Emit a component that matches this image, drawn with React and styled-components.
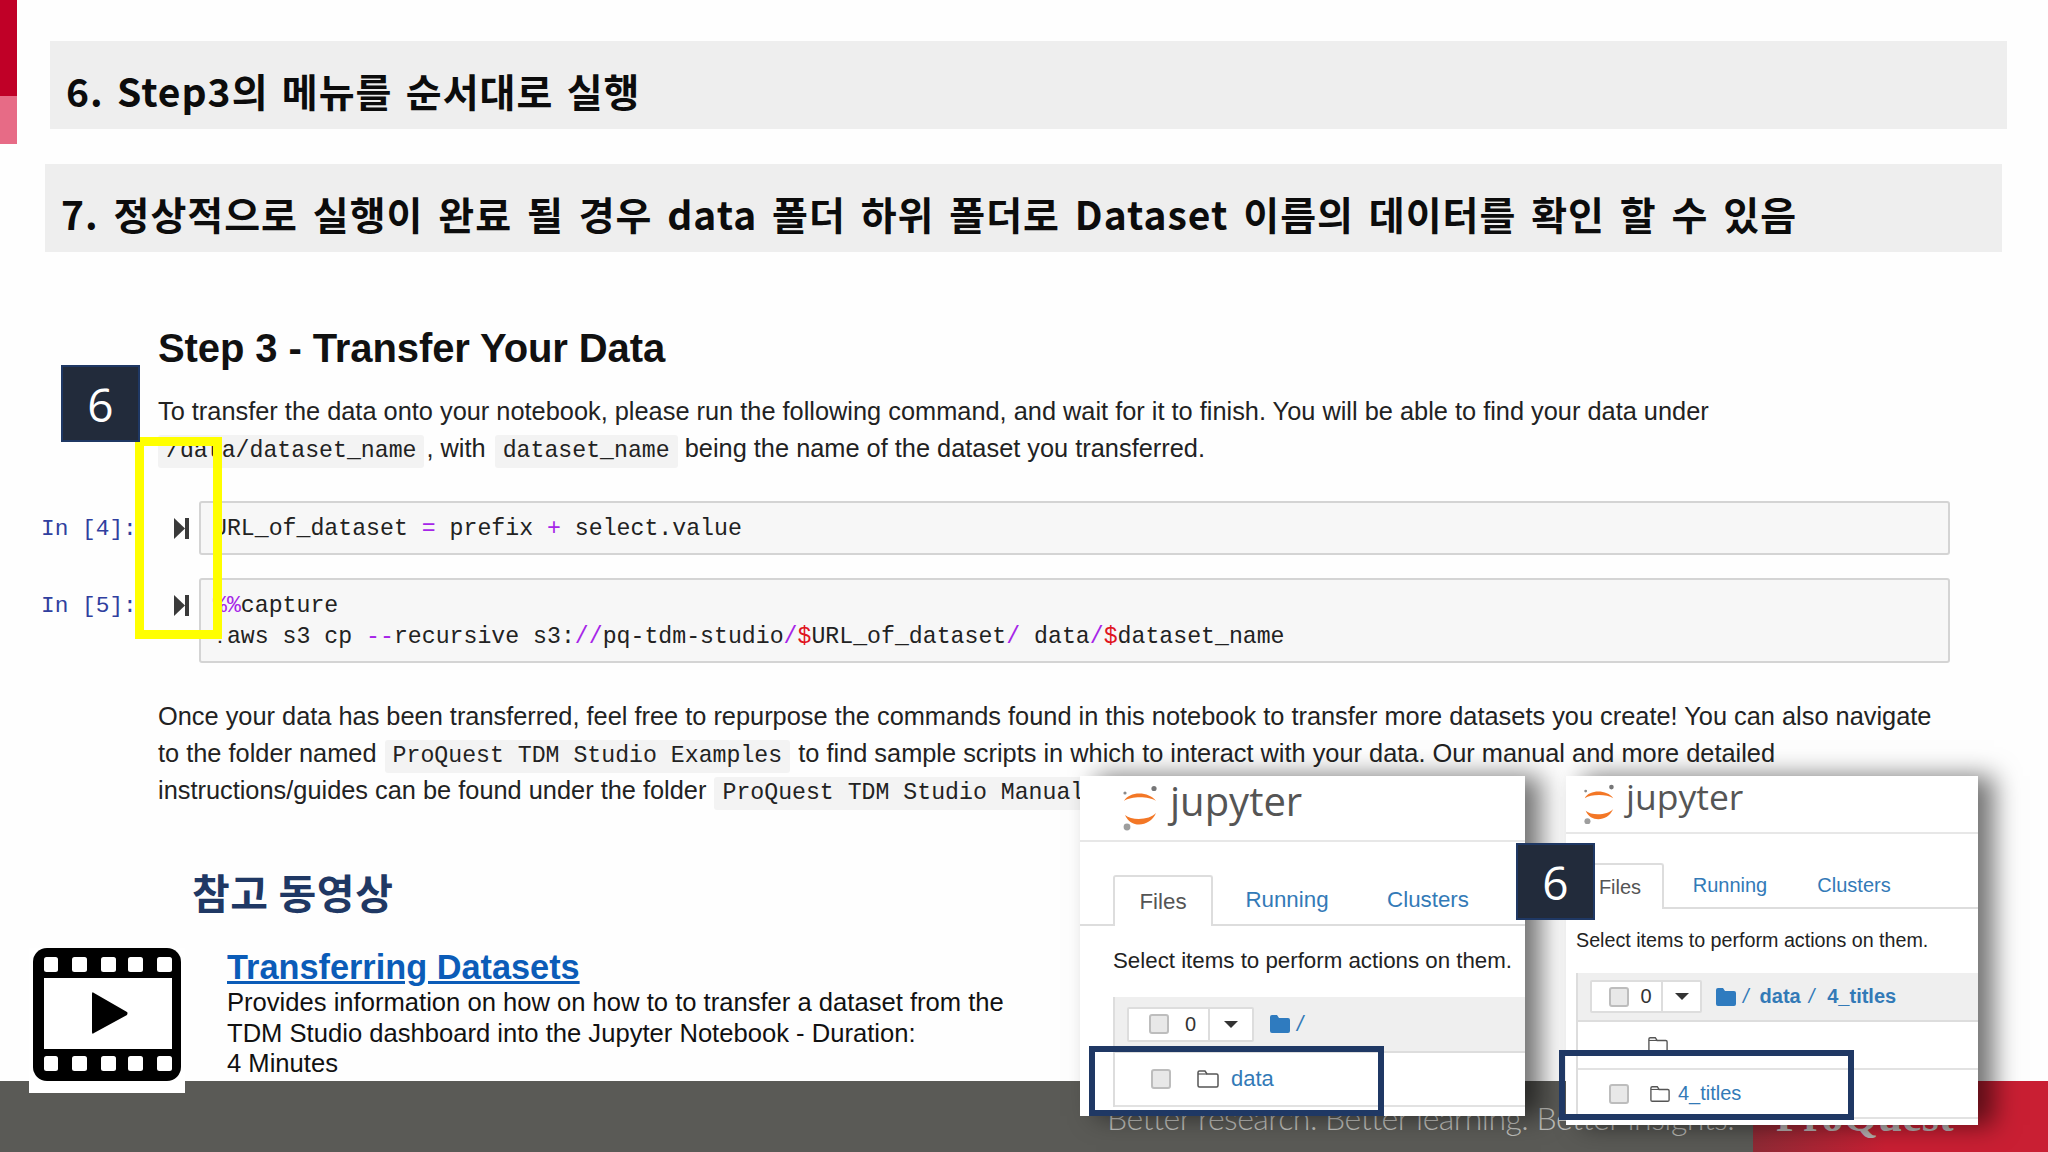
import React from "react";
import styled, { createGlobalStyle } from "styled-components";

const KO = `"Noto Sans CJK KR", "Noto Sans", sans-serif`;
const SANS = `"Liberation Sans", Arial, sans-serif`;
const MONO = `"Liberation Mono", monospace`;

const Global = createGlobalStyle`
  html, body { margin: 0; padding: 0; background: #fff; }
  * { box-sizing: border-box; }
`;

const Slide = styled.div`
  position: relative;
  width: 2048px;
  height: 1152px;
  overflow: hidden;
  background: #fefefe;
  display: flex;
  flex-direction: column;
  font-family: ${SANS};
`;

/* top: red accent + two title bars */
const Header = styled.header`
  display: flex;
  height: 252px;
  flex-shrink: 0;
`;
const Accent = styled.div`
  width: 17px;
  height: 144px;
  flex-shrink: 0;
  background: linear-gradient(#c00027 0 96px, #e76b86 96px);
`;
const TitleBars = styled.div`
  display: flex;
  flex-direction: column;
  gap: 35px;
  padding-top: 41px;
`;
const TitleBar = styled.h2`
  margin: 0 0 0 ${(p) => p.$inset}px;
  width: 1957px;
  height: 88px;
  padding: 9px 16px 0;
  background: #eeeeee;
  font: 700 39px/80px ${KO};
  color: #0c0c0c;
  white-space: nowrap;
  letter-spacing: 1px;
  word-spacing: ${(p) => p.$wordGap}px;
`;

/* notebook */
const Main = styled.main`
  flex: 1;
  min-height: 0;
  padding-top: 72px;
`;
const NotebookText = styled.div`
  padding-left: 158px;
`;
const StepHeading = styled.h1`
  margin: 0 0 21px;
  font: 700 40px/48px ${SANS};
  letter-spacing: -0.1px;
  color: #111;
  white-space: nowrap;
`;
const Line = styled.p`
  margin: 0;
  height: 37px;
  font: 400 25.36px/37px ${SANS};
  color: #222;
  white-space: nowrap;
`;
const Chip = styled.code`
  display: inline-block;
  height: 33px;
  padding: 0 8px;
  margin: 0 ${(p) => p.$after || 0}px 0 ${(p) => p.$before || 0}px;
  border-radius: 3px;
  background: #f3f3f3;
  font: 400 23.2px/33px ${MONO};
  color: #222;
`;
const Cells = styled.div`
  display: flex;
  flex-direction: column;
  gap: 23px;
  margin: 34px 98px 0 41px;
`;
const CellRow = styled.div`
  display: flex;
  align-items: flex-start;
`;
const Prompt = styled.span`
  width: 133px;
  padding-top: 13px;
  font: 400 22.8px/31px ${MONO};
  color: #303f9f;
  flex-shrink: 0;
`;
const RunIcon = styled.svg`
  width: 15px;
  height: 21px;
  margin-top: 17px;
  flex-shrink: 0;
`;
const CodeBox = styled.pre`
  flex: 1;
  margin: 0 0 0 10px;
  padding: 11px 12px 8px;
  min-height: 53px;
  background: #f7f7f7;
  border: 2px solid #d4d4d4;
  border-radius: 3px;
  font: 400 23.2px/31px ${MONO};
  color: #222;
`;
const Op = styled.span`
  color: #a626e8;
`;
const Var = styled.span`
  color: #e0141e;
`;
const AfterCells = styled(NotebookText)`
  margin-top: 35px;
`;

/* reference video */
const VideoHeading = styled.h3`
  margin: 54px 0 0 192px;
  font: 700 41px/56px ${KO};
  letter-spacing: 0.6px;
  color: #1f3864;
`;
const VideoRow = styled.div`
  position: relative;
  z-index: 1;
  display: flex;
  margin: 29px 0 0 29px;
`;
const FilmTile = styled.div`
  width: 156px;
  height: 145px;
  padding: 0 4px;
  background: #fff;
  flex-shrink: 0;
`;
const VideoBody = styled.div`
  margin: -1px 0 0 42px;
`;
const VideoLink = styled.a`
  display: block;
  font: 700 34.3px/40px ${SANS};
  color: #0b5cb8;
  text-decoration: underline;
  white-space: nowrap;
`;
const VideoText = styled.div`
  font: 400 25.6px/30.5px ${SANS};
  color: #111;
  white-space: nowrap;
`;

/* footer */
const Footer = styled.footer`
  display: flex;
  height: 71px;
  flex-shrink: 0;
  overflow: hidden;
`;
const Tagline = styled.div`
  flex: 1;
  min-width: 0;
  overflow: hidden;
  padding: 13px 0 0 1107px;
  background: #5a5a56;
  color: #bdbdb9;
  font: 300 32px/48px Lato, sans-serif;
  letter-spacing: -0.5px;
  white-space: nowrap;
`;
const Brand = styled.div`
  width: 295px;
  flex-shrink: 0;
  padding: 6px 0 0 23px;
  background: linear-gradient(90deg, #8f2a35, #c91f33 45%);
  color: #b9b3b3;
  font: 700 44px/60px "Liberation Serif", serif;
`;

/* overlays */
const Badge = styled.div`
  position: absolute;
  left: ${(p) => p.$x}px;
  top: ${(p) => p.$y}px;
  z-index: 4;
  width: 79px;
  height: 77px;
  display: flex;
  align-items: center;
  justify-content: center;
  background: #222b3b;
  border: 2px solid #1f3864;
  color: #fff;
  font: 400 46px/1 "Open Sans", sans-serif;
`;
const YellowFrame = styled.div`
  position: absolute;
  left: 135px;
  top: 437px;
  z-index: 3;
  width: 87px;
  height: 202px;
  border: 9px solid #ffff00;
`;
const BlueFrame = styled.div`
  position: absolute;
  left: ${(p) => p.$x}px;
  top: ${(p) => p.$y}px;
  z-index: 3;
  width: 295px;
  height: 70px;
  border: 6px solid #1f3864;
`;
const Window = styled.section`
  position: absolute;
  left: ${(p) => p.$x}px;
  top: 776px;
  z-index: 2;
  width: ${(p) => p.$w}px;
  height: ${(p) => p.$h}px;
  background: #fff;
  box-shadow: 16px 0 24px rgba(0, 0, 0, 0.55);
  font-family: ${SANS};
  overflow: hidden;
`;
const WinHead = styled.div`
  display: flex;
  align-items: center;
  height: ${(p) => p.$h}px;
  padding-left: ${(p) => p.$pad}px;
  gap: ${(p) => p.$gap}px;
  border-bottom: 2px solid #e7e7e7;
`;
const WinLogo = styled.svg`
  width: ${(p) => p.$w}px;
  height: auto;
  flex-shrink: 0;
`;
const Wordmark = styled.span`
  font: 400 ${(p) => p.$size}px/1 "Open Sans", sans-serif;
  color: #555;
  margin-bottom: 14px;
`;
const Tabs = styled.div`
  display: flex;
  margin-top: ${(p) => p.$top}px;
  padding-left: ${(p) => p.$pad}px;
  height: ${(p) => p.$h}px;
  border-bottom: 2px solid #ddd;
`;
const Tab = styled.div`
  width: ${(p) => p.$w}px;
  height: ${(p) => p.$h}px;
  display: flex;
  align-items: center;
  justify-content: center;
  font-size: ${(p) => p.$size}px;
  color: ${(p) => (p.$active ? "#555" : "#337ab7")};
  ${(p) =>
    p.$active &&
    `background:#fff;border:2px solid #ddd;border-bottom:0;border-radius:3px 3px 0 0;`}
`;
const Hint = styled.p`
  margin: 0;
  padding: ${(p) => p.$top}px 0 0 ${(p) => p.$pad}px;
  font-size: ${(p) => p.$size}px;
  line-height: 28px;
  color: #222;
  white-space: nowrap;
`;
const FileList = styled.div`
  margin: ${(p) => p.$top}px 0 0 ${(p) => p.$pad}px;
  border-left: 2px solid #ddd;
`;
const ListBar = styled.div`
  display: flex;
  align-items: center;
  height: ${(p) => p.$h}px;
  padding-left: ${(p) => p.$pad}px;
  background: #efefef;
  border-bottom: 2px solid #ddd;
  font-size: ${(p) => p.$size}px;
`;
const SelectGroup = styled.div`
  display: flex;
  align-items: center;
  width: ${(p) => p.$w}px;
  height: ${(p) => p.$h}px;
  background: #fff;
  border: 2px solid #ddd;
  border-radius: 2px;
  margin-right: ${(p) => p.$after}px;
  color: #333;
  font-size: 20px;
`;
const SelectMain = styled.div`
  flex: 1;
  height: 100%;
  display: flex;
  align-items: center;
  justify-content: center;
  gap: ${(p) => p.$gap}px;
  padding-left: 8px;
  border-right: 2px solid #ddd;
`;
const Caret = styled.span`
  width: ${(p) => p.$w}px;
  display: flex;
  justify-content: center;
  &::after {
    content: "";
    border: 7px solid transparent;
    border-top-color: #333;
    border-bottom: 0;
  }
`;
const Box = styled.span`
  display: inline-block;
  width: 20px;
  height: 20px;
  flex-shrink: 0;
  background: #e8e8e8;
  border: 2px solid #bdbdbd;
  border-radius: 3px;
`;
const Crumb = styled.span`
  color: #337ab7;
  font-weight: ${(p) => (p.$strong ? 700 : 400)};
  font-style: ${(p) => (p.$slash ? "italic" : "normal")};
  margin-left: ${(p) => p.$left || 0}px;
`;
const FileRow = styled.div`
  display: flex;
  align-items: center;
  height: ${(p) => p.$h}px;
  padding-left: ${(p) => p.$pad}px;
  border-bottom: 2px solid #e2e2e2;
  font-size: ${(p) => p.$size}px;
  color: #337ab7;
`;
const FolderGlyph = styled.svg`
  width: ${(p) => p.$w}px;
  height: 18px;
  margin: 0 ${(p) => p.$after}px 0 ${(p) => p.$before}px;
  flex-shrink: 0;
`;
const BlueFolder = styled.svg`
  width: 20px;
  height: 18px;
  margin-right: 7px;
  flex-shrink: 0;
`;

const JupyterLogo = ({ w }) => (
  <WinLogo $w={w} viewBox="0 0 36 46">
    <path d="M2 16C7 6 27 6 34 16C27 11 9 11 2 16Z" fill="#f37726" />
    <path d="M3 30C9 44 28 42 34 28C28 35 10 36 3 30Z" fill="#f37726" />
    <circle cx="32" cy="3.5" r="2.6" fill="#767677" />
    <circle cx="3" cy="8" r="1.6" fill="#8a8a8a" />
    <circle cx="5" cy="42" r="3.4" fill="#9e9e9e" />
  </WinLogo>
);

const FilledFolder = () => (
  <BlueFolder viewBox="0 0 20 18">
    <path d="M0 2Q0 0 2 0H7L9 3H18Q20 3 20 5V16Q20 18 18 18H2Q0 18 0 16Z" fill="#2f7bbf" />
  </BlueFolder>
);

const OutlineFolder = ({ w, before, after }) => (
  <FolderGlyph $w={w} $before={before} $after={after} viewBox="0 0 22 18">
    <path d="M1 2.5Q1 1 2.5 1H8L10 4H19.5Q21 4 21 5.5V15.5Q21 17 19.5 17H2.5Q1 17 1 15.5Z" fill="none" stroke="#555" strokeWidth="1.5" />
    <path d="M10 4H1" fill="none" stroke="#555" strokeWidth="1.2" />
  </FolderGlyph>
);

const Run = () => (
  <RunIcon viewBox="0 0 15 21">
    <path d="M0 0L11 10.5L0 21Z" fill="#3a3a3a" />
    <rect x="11" width="4" height="21" fill="#3a3a3a" />
  </RunIcon>
);

const HOLES = [
  [11, 14],
  [39, 15],
  [68, 15],
  [95, 15],
  [124, 15],
];

const FilmIcon = () => (
  <svg width="148" height="133" viewBox="0 0 148 133">
    <rect width="148" height="133" rx="14" fill="#000" />
    {HOLES.map(([x, w]) => (
      <React.Fragment key={x}>
        <rect x={x} y="9" width={w} height="15" rx="2.5" fill="#fff" />
        <rect x={x} y="108" width={w} height="15" rx="2.5" fill="#fff" />
      </React.Fragment>
    ))}
    <rect x="11" y="30" width="128" height="71" fill="#fff" />
    <path d="M59 46Q59 43 61 45L94 64Q95 65 94 67L61 85Q59 87 59 84Z" fill="#000" />
  </svg>
);

export default function App() {
  return (
    <>
      <Global />
      <Slide>
        <Header>
          <Accent />
          <TitleBars>
            <TitleBar $inset={33} $wordGap={3.5}>6. Step3의 메뉴를 순서대로 실행</TitleBar>
            <TitleBar $inset={28} $wordGap={5}>7. 정상적으로 실행이 완료 될 경우 data 폴더 하위 폴더로 Dataset 이름의 데이터를 확인 할 수 있음</TitleBar>
          </TitleBars>
        </Header>

        <Main>
          <NotebookText>
            <StepHeading>Step 3 - Transfer Your Data</StepHeading>
            <Line>To transfer the data onto your notebook, please run the following command, and wait for it to finish. You will be able to find your data under</Line>
            <Line>
              <Chip $after={2}>/data/dataset_name</Chip>, with <Chip $before={2}>dataset_name</Chip> being the name of the dataset you transferred.
            </Line>
          </NotebookText>

          <Cells>
            <CellRow>
              <Prompt>In [4]:</Prompt>
              <Run />
              <CodeBox>URL_of_dataset <Op>=</Op> prefix <Op>+</Op> select.value</CodeBox>
            </CellRow>
            <CellRow>
              <Prompt>In [5]:</Prompt>
              <Run />
              <CodeBox>
                <Op>%%</Op>capture{"\n"}!aws s3 cp <Op>--</Op>recursive s3:<Op>//</Op>pq-tdm-studio<Op>/</Op><Var>$</Var>URL_of_dataset<Op>/</Op> data<Op>/</Op><Var>$</Var>dataset_name
              </CodeBox>
            </CellRow>
          </Cells>

          <AfterCells>
            <Line>Once your data has been transferred, feel free to repurpose the commands found in this notebook to transfer more datasets you create! You can also navigate</Line>
            <Line>to the folder named <Chip $before={1} $after={1}>ProQuest TDM Studio Examples</Chip> to find sample scripts in which to interact with your data. Our manual and more detailed</Line>
            <Line>instructions/guides can be found under the folder <Chip $before={1}>ProQuest TDM Studio Manuals</Chip></Line>
          </AfterCells>

          <VideoHeading>참고 동영상</VideoHeading>
          <VideoRow>
            <FilmTile><FilmIcon /></FilmTile>
            <VideoBody>
              <VideoLink>Transferring Datasets</VideoLink>
              <VideoText>Provides information on how on how to to transfer a dataset from the</VideoText>
              <VideoText>TDM Studio dashboard into the Jupyter Notebook - Duration:</VideoText>
              <VideoText>4 Minutes</VideoText>
            </VideoBody>
          </VideoRow>
        </Main>

        <Footer>
          <Tagline>Better research. Better learning. Better insights.</Tagline>
          <Brand>ProQuest</Brand>
        </Footer>

        <Window $x={1080} $w={445} $h={340}>
          <WinHead $h={66} $pad={42} $gap={12}>
            <JupyterLogo w={36} />
            <Wordmark $size={40}>jupyter</Wordmark>
          </WinHead>
          <Tabs $top={33} $pad={33} $h={51}>
            <Tab $active $w={100} $h={51} $size={22.3}>Files</Tab>
            <Tab $w={148} $h={49} $size={22.3}>Running</Tab>
            <Tab $w={134} $h={49} $size={22.3}>Clusters</Tab>
          </Tabs>
          <Hint $top={21} $pad={33} $size={22.3}>Select items to perform actions on them.</Hint>
          <FileList $top={22} $pad={33}>
            <ListBar $h={56} $pad={12} $size={22}>
              <SelectGroup $w={127} $h={35} $after={16}>
                <SelectMain $gap={16}><Box /><span>0</span></SelectMain>
                <Caret $w={42} />
              </SelectGroup>
              <FilledFolder />
              <Crumb $slash>/</Crumb>
            </ListBar>
            <FileRow $h={54} $pad={36} $size={22}>
              <Box />
              <OutlineFolder w={22} before={26} after={12} />
              data
            </FileRow>
          </FileList>
        </Window>

        <Window $x={1566} $w={412} $h={349}>
          <WinHead $h={58} $pad={17} $gap={11}>
            <JupyterLogo w={32} />
            <Wordmark $size={35.5}>jupyter</Wordmark>
          </WinHead>
          <Tabs $top={29} $pad={10} $h={46}>
            <Tab $active $w={88} $h={46} $size={20}>Files</Tab>
            <Tab $w={132} $h={44} $size={20}>Running</Tab>
            <Tab $w={116} $h={44} $size={20}>Clusters</Tab>
          </Tabs>
          <Hint $top={17} $pad={10} $size={19.7}>Select items to perform actions on them.</Hint>
          <FileList $top={19} $pad={10}>
            <ListBar $h={49} $pad={12} $size={20}>
              <SelectGroup $w={112} $h={33} $after={14}>
                <SelectMain $gap={11}><Box /><span>0</span></SelectMain>
                <Caret $w={37} />
              </SelectGroup>
              <FilledFolder />
              <Crumb $slash>/</Crumb>
              <Crumb $strong $left={11}>data</Crumb>
              <Crumb $slash $left={8}>/</Crumb>
              <Crumb $strong $left={13}>4_titles</Crumb>
            </ListBar>
            <FileRow $h={48} $pad={31} $size={20}>
              <OutlineFolder w={20} before={39} after={0} />
            </FileRow>
            <FileRow $h={49} $pad={31} $size={20}>
              <Box />
              <OutlineFolder w={20} before={21} after={8} />
              4_titles
            </FileRow>
          </FileList>
        </Window>

        <Badge $x={61} $y={365}>6</Badge>
        <Badge $x={1516} $y={843}>6</Badge>
        <YellowFrame />
        <BlueFrame $x={1089} $y={1046} />
        <BlueFrame $x={1559} $y={1050} />
      </Slide>
    </>
  );
}
